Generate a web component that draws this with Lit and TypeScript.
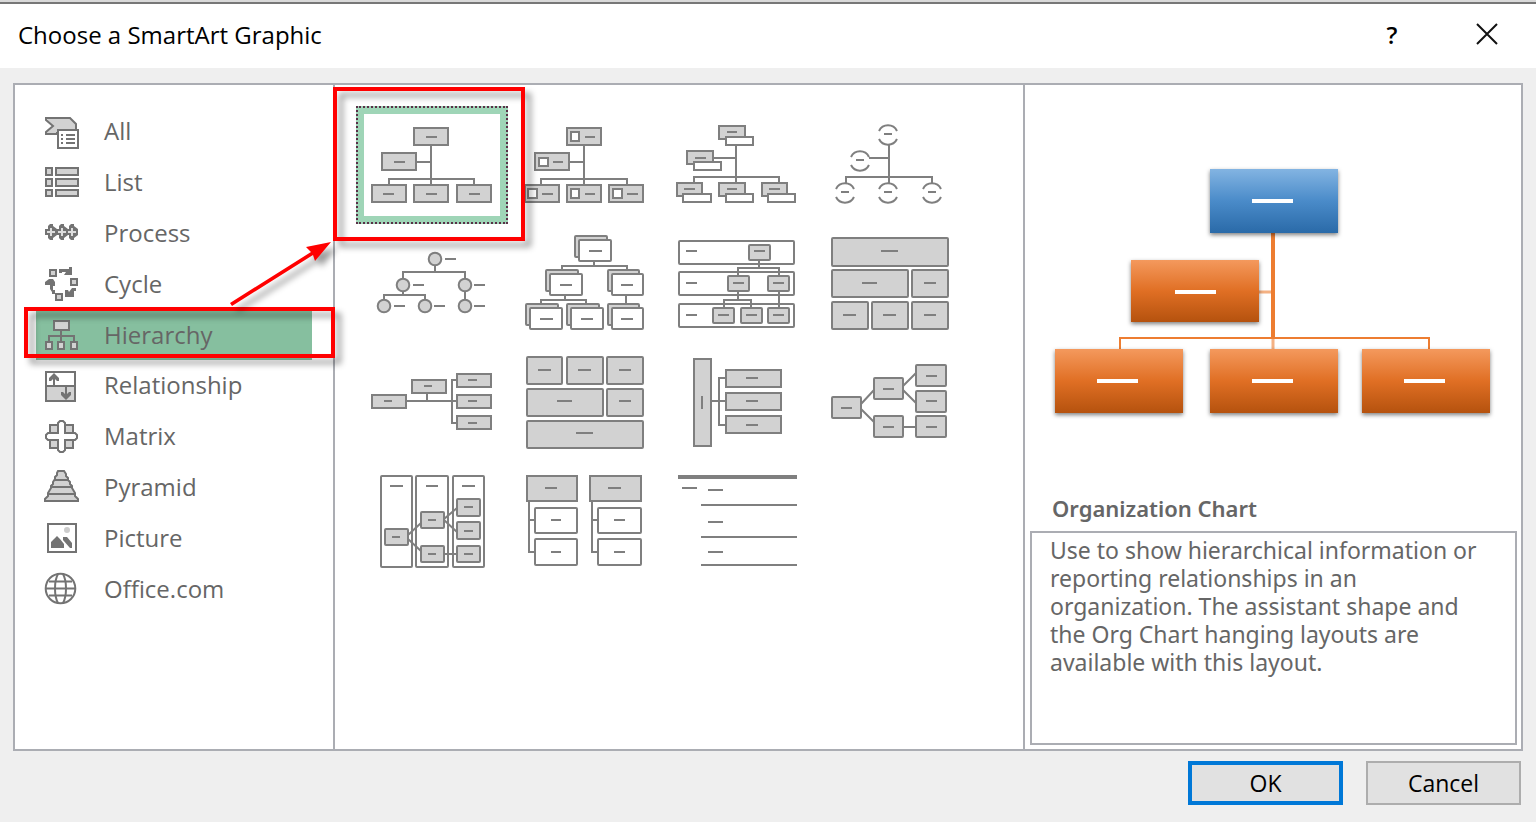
import { LitElement, html, svg, css } from "lit";
import { customElement, state } from "lit/decorators.js";

type Box = [number, number, number, number];

/* Each shape is given by its outer edges: left, top, right, bottom. */
const box = (b: Box, cls = "g", rx = 0) =>
  svg`<rect class=${cls} x=${b[0] + 1} y=${b[1] + 1} width=${b[2] - b[0] - 2} height=${b[3] - b[1] - 2} rx=${rx}></rect>`;
const boxes = (list: Box[], cls = "g", rx = 0) => list.map((b) => box(b, cls, rx));
const dashes = (list: [number, number, number][]) =>
  list.map(([x1, x2, y]) => svg`<path class="l" d=${`M${x1} ${y}H${x2}`}></path>`);
const line = (d: string) => svg`<path class="l" d=${d}></path>`;
const stack = (list: Box[]) =>
  list.map((b) => [box([b[0] - 4, b[1] - 4, b[2] - 4, b[3] - 4], "g", 1), box(b, "w", 1)]);
const arcs = (list: [number, number][]) =>
  list.map(([x, y]) => line(`M${x - 9} ${y - 4}A10 10 0 0 1 ${x + 9} ${y - 4}M${x - 9} ${y + 4}A10 10 0 0 0 ${x + 9} ${y + 4}M${x - 4} ${y - 1}h8`));

const orgLines = "M75 39V78M33 79V73H118V79M61 56H75";

const layouts = [
  {
    name: "Organization Chart",
    art: svg`${line(orgLines)}
      ${boxes([[57, 21, 93, 40], [25, 46, 61, 65], [15, 78, 51, 97], [57, 78, 93, 97], [100, 78, 136, 97]])}
      ${dashes([[70, 81, 31], [38, 49, 56], [27, 38, 88], [70, 81, 88], [113, 124, 88]])}`,
  },
  {
    name: "Picture Organization Chart",
    art: svg`${line("M75 39V78M32 79V73H118V79M61 56H75")}
      ${boxes([[57, 21, 93, 40], [25, 46, 61, 65], [15, 78, 51, 97], [57, 78, 93, 97], [99, 78, 135, 97]])}
      ${boxes([[61, 25, 71, 36], [29, 51, 40, 61], [18, 82, 29, 93], [61, 82, 71, 93], [103, 82, 114, 93]], "w")}
      ${dashes([[76, 86, 31], [44, 54, 56], [33, 44, 88], [76, 86, 88], [118, 129, 88]])}`,
  },
  {
    name: "Name and Title Organization Chart",
    art: svg`${line("M74 40V78M32 79V71H117V79M51 52H74")}
      ${boxes([[56, 19, 84, 34], [24, 44, 52, 59], [14, 76, 41, 91], [56, 76, 84, 91], [99, 76, 126, 91]])}
      ${boxes([[63, 30, 92, 40], [31, 55, 60, 65], [20, 87, 50, 97], [63, 87, 92, 97], [105, 87, 134, 97]], "w")}
      ${dashes([[65, 75, 26], [33, 44, 52], [22, 33, 83], [65, 75, 83], [107, 118, 83]])}`,
  },
  {
    name: "Half Circle Organization Chart",
    art: svg`${line("M74 39V77M31 77V71H117V77M54 52H74")}
      ${arcs([[73, 29], [45, 55], [30, 87], [73, 87], [117, 87]])}`,
  },
  {
    name: "Circle Picture Hierarchy",
    art: svg`${line("M79 40V47M47 54V47H109V54M47 66V70M28 75V70H69V75M109 66V75")}
      ${[[79, 34], [47, 60], [109, 60], [28, 81], [69, 81], [109, 81]].map(([x, y]) => svg`<circle class="g" cx=${x} cy=${y} r="6.3"></circle>`)}
      ${dashes([[89, 100, 34], [57, 68, 60], [118, 129, 60], [38, 49, 81], [78, 89, 81], [118, 129, 81]])}`,
  },
  {
    name: "Hierarchy",
    art: svg`${line("M85 36V41M53 45V41H118V45M56 70V75M32 79V75H77V79M117 70V79")}
      ${stack([[69, 14, 103, 37], [40, 48, 74, 71], [102, 48, 135, 71], [20, 82, 54, 105], [61, 82, 95, 105], [102, 82, 135, 105]])}
      ${dashes([[80, 93, 26], [51, 63, 60], [112, 124, 60], [31, 44, 94], [72, 84, 94], [112, 124, 94]])}`,
  },
  {
    name: "Labeled Hierarchy",
    art: svg`${boxes([[16, 15, 133, 40], [16, 46, 133, 71], [16, 78, 133, 103]], "w", 1)}
      ${line("M97 34V43M76 51V43H117V51M76 66V75M62 83V75H89V83M117 66V83")}
      ${boxes([[86, 19, 109, 36], [65, 50, 88, 67], [105, 50, 128, 67], [50, 82, 73, 99], [78, 82, 101, 99], [105, 82, 128, 99]], "g", 1)}
      ${dashes([[24, 35, 26], [24, 35, 58], [24, 35, 90], [92, 103, 26], [71, 82, 58], [111, 122, 58], [56, 67, 90], [84, 95, 90], [111, 122, 90]])}`,
  },
  {
    name: "Table Hierarchy",
    art: svg`${boxes([[16, 12, 134, 42], [16, 44, 94, 73], [96, 44, 134, 73], [16, 76, 54, 105], [56, 76, 94, 105], [96, 76, 134, 105]], "g", 1)}
      ${dashes([[66, 83, 26], [47, 62, 58], [109, 121, 58], [28, 41, 90], [68, 81, 90], [109, 121, 90]])}`,
  },
  {
    name: "Horizontal Organization Chart",
    art: svg`${line("M50 57H101M71 49V57M101 36H96V79H101")}
      ${boxes([[15, 50, 51, 65], [55, 35, 91, 50], [100, 29, 136, 44], [100, 50, 136, 65], [100, 71, 136, 86]])}
      ${dashes([[28, 36, 57], [68, 76, 42], [112, 121, 36], [112, 121, 57], [112, 121, 79]])}`,
  },
  {
    name: "Architecture Layout",
    art: svg`${boxes([[17, 12, 54, 41], [57, 12, 95, 41], [97, 12, 135, 41], [17, 44, 95, 73], [97, 44, 135, 73], [17, 76, 135, 105]], "g", 1)}
      ${dashes([[29, 42, 26], [69, 82, 26], [110, 122, 26], [48, 63, 57], [110, 122, 57], [67, 84, 89]])}`,
  },
  {
    name: "Horizontal Multi-Level Hierarchy",
    art: svg`${line("M49 57H64M64 34H57V81H64")}
      ${boxes([[31, 14, 50, 103], [63, 25, 120, 44], [63, 48, 120, 67], [63, 71, 120, 90]])}
      ${dashes([[84, 96, 34], [84, 96, 57], [84, 96, 81]])}${line("M40 52V65")}`,
  },
  {
    name: "Horizontal Hierarchy",
    art: svg`${line("M46 60L59 46M46 65L59 78M88 42L101 29M88 46L101 59M88 83H101")}
      ${boxes([[16, 52, 47, 75], [58, 33, 89, 56], [58, 71, 89, 94], [100, 20, 132, 43], [100, 46, 132, 69], [100, 71, 132, 94]], "g", 1)}
      ${dashes([[26, 37, 64], [68, 79, 45], [68, 79, 83], [111, 122, 32], [111, 122, 57], [111, 122, 83]])}`,
  },
  {
    name: "Horizontal Labeled Hierarchy",
    art: svg`${boxes([[24, 12, 57, 105], [59, 12, 93, 105], [96, 12, 129, 105]], "w", 1)}
      ${line("M52 72L65 60M52 76L65 88M88 56L101 45M88 57L101 69M88 91H101")}
      ${boxes([[28, 65, 53, 83], [64, 48, 89, 66], [64, 82, 89, 100], [100, 35, 125, 54], [100, 58, 125, 77], [100, 82, 125, 100]], "g", 1)}
      ${dashes([[34, 47, 23], [70, 82, 23], [106, 119, 23], [36, 44, 74], [72, 80, 57], [72, 80, 91], [108, 117, 44], [108, 117, 68], [108, 117, 91]])}`,
  },
  {
    name: "Hierarchy List",
    art: svg`${line("M20 38V89H26M20 57H26M83 38V89H89M83 57H89")}
      ${boxes([[17, 12, 69, 39], [80, 12, 133, 39]], "g")}
      ${boxes([[25, 44, 69, 71], [25, 75, 69, 103], [88, 44, 133, 71], [88, 75, 133, 103]], "w", 1)}
      ${dashes([[36, 48, 25], [99, 112, 25], [42, 52, 57], [42, 52, 89], [105, 116, 57], [105, 116, 89]])}`,
  },
  {
    name: "Lined List",
    art: svg`<path class="thick" d="M16 14H135"></path>
      ${dashes([[20, 35, 25], [46, 61, 27], [46, 61, 59], [46, 61, 89], [39, 135, 42], [39, 135, 74], [39, 135, 102]])}`,
  },
];

const categories = [
  {
    name: "All",
    art: svg`<path class="g" d="M2 5H26L32 11V20H13V21H2V19L9 13L2 7Z"></path>
      <rect class="w" x="14" y="17" width="20" height="18"></rect>
      <path class="l" d="M17 22H19M22 22H31M17 26H19M22 26H31M17 30H19M22 30H31"></path>`,
  },
  {
    name: "List",
    art: svg`${boxes([[1, 3, 9, 12], [11, 3, 35, 12], [1, 14, 9, 23], [11, 14, 35, 23], [1, 25, 9, 33], [11, 25, 35, 33]])}`,
  },
  {
    name: "Process",
    art: svg`${[0, 11, 21].map((x) => svg`
      <path class="s" d=${`M${x + 1} 14H${x + 4}V11L${x + 6} 9H${x + 9}V11L${x + 13} 14V20L${x + 9} 23V25H${x + 6}L${x + 4} 23V20H${x + 1}Z`}></path>
      <path class="plus" d=${`M${x + 3} 17H${x + 11}M${x + 7} 13V21`}></path>`)}`,
  },
  {
    name: "Cycle",
    art: svg`${boxes([[5, 3, 13, 11], [26, 12, 34, 20], [11, 27, 19, 35]])}
      <path class="s" d="M15 3H25V1H28V9H20L22 6H18V7H15ZM1 16L5 13H9L11 16V20H9V24H11V28H8V26L6 23V19H1ZM21 24H24L25 26L28 22H32V25H30V31H21Z"></path>`,
  },
  {
    name: "Hierarchy",
    art: svg`${line("M17 12V25M5 25V19H30V25")}
      ${boxes([[9, 3, 26, 14], [1, 24, 9, 33], [13, 24, 21, 33], [26, 24, 34, 33]])}`,
  },
  {
    name: "Relationship",
    art: svg`<rect class="w" x="2" y="5" width="29" height="29"></rect><rect class="g" x="2" y="19" width="29" height="15"></rect>
      ${line("M10 8V18M22 20V30")}
      <path class="s" d="M10 6L15 11V14H13L10 11L7 14H5V11ZM22 33L27 28V25H25L22 28L19 25H17V28Z"></path>`,
  },
  {
    name: "Matrix",
    art: svg`${boxes([[5, 6, 15, 16], [20, 6, 30, 16], [5, 21, 15, 31], [20, 21, 30, 31]])}
      <path class="w" d="M14 5L16 3H19L21 5V15H31L33 17V20L31 22H21V32L19 34H16L14 32V22H4L2 20V17L4 15H14Z"></path>`,
  },
  {
    name: "Pyramid",
    art: svg`<path class="g" d="M14 2H20L22 5V7L24 9V11L26 13V15L28 17V19L31 24V27L34 30V32H1V30L4 27V24L7 19V17L9 15V13L11 10V8L13 6V4Z"></path>${line("M10 11H25M8 18H28M4 25H31")}`,
  },
  {
    name: "Picture",
    art: svg`<rect class="w" x="4" y="4" width="28" height="28"></rect><circle class="sun" cx="23" cy="10" r="3"></circle>
      <path class="s" d="M7 28V22L10 19L13 16L16 19L20 24V28ZM19 17H23L28 23V28H26L19 20Z"></path>`,
  },
  {
    name: "Office.com",
    art: svg`<circle class="w" cx="16.5" cy="17.5" r="14.8"></circle>
      <path class="thin" d="M2 17.5H31M5 10.5H28M5 24.5H28M14 3C10 10 10 25 14 32M19 3C23 10 23 25 19 32"></path>`,
  },
];

@customElement("app-root")
export class AppRoot extends LitElement {
  @state() private category = "Hierarchy";
  @state() private layout = "Organization Chart";

  static styles = css`
    :host {
      display: flex;
      flex-direction: column;
      min-height: 100vh;
      box-sizing: border-box;
      background: #efefef;
      color: #666;
      font-family: "Open Sans", "Noto Sans", sans-serif;
      font-size: 24px;
      line-height: 28px;
    }
    * { box-sizing: border-box; }
    h1, h2, p, ul { margin: 0; padding: 0; font-weight: 400; font-size: inherit; }
    ul { list-style: none; }
    button { font: inherit; color: inherit; border: 0; padding: 0; background: none; }
    svg { display: block; flex: none; overflow: visible; }
    .titlebar {
      display: flex;
      align-items: center;
      justify-content: space-between;
      height: 68px;
      padding: 0 38px 0 18px;
      border-top: 2px solid #d9d9d9;
      box-shadow: inset 0 2px #777;
      background: #fff;
      color: #000;
    }
    .window-actions { display: flex; align-items: center; gap: 76px; }
    .help { width: 16px; font-weight: 600; }
    .cross { fill: none; stroke: #111; stroke-width: 2; }
    .body {
      flex: 1;
      display: grid;
      grid-template-columns: 320px minmax(0, 1fr) 498px;
      position: relative;
      margin: 15px 13px 0 13px;
      border: 2px solid #abadb3;
      background: #fff;
    }
    .categories { padding: 21px 21px 0; border-right: 2px solid #abadb3; }
    .category-list { display: grid; grid-auto-rows: 1fr; height: 508px; }
    .category {
      position: relative;
      display: flex;
      align-items: center;
      gap: 24px;
      width: 100%;
      height: 100%;
      padding-left: 8px;
      text-align: left;
    }
    .category.selected { background: #86bf9f; }
    .gallery {
      display: grid;
      grid-template-columns: repeat(auto-fill, 152px);
      grid-auto-rows: 118px;
      gap: 1px;
      align-content: start;
      padding: 21px 0 0 21px;
    }
    .tile { position: relative; border: 2px solid transparent; padding: 6px; }
    .tile > svg { margin: -8px; }
    .tile.selected {
      z-index: 1;
      border: 2px dotted #5a3048;
      background: linear-gradient(#fff, #fff) content-box, #9fd5b7;
    }
    .g, .w, .l, .thick, .thin { stroke: #7f7f7f; stroke-width: 2; }
    .g { fill: #d2d2d2; }
    .w { fill: #fff; }
    .l, .thick, .thin { fill: none; }
    .thick { stroke-width: 4; }
    .category .g, .category .w, .category .l, .category .thin { stroke: #737373; }
    .s { fill: #737373; }
    .plus { fill: none; stroke: #ddd; stroke-width: 2; }
    .sun { fill: #ccc; }
    .marker {
      position: absolute;
      z-index: 2;
      border: 4px solid #f00;
      filter: drop-shadow(6px 6px 3px rgba(0, 0, 0, 0.4));
      pointer-events: none;
    }
    .marker.on-category { inset: -2px -23px 2px -12px; }
    .marker.on-tile { inset: -21px -19px -19px -25px; }
    .arrow {
      position: absolute;
      left: 211px;
      top: 152px;
      z-index: 2;
      filter: drop-shadow(6px 6px 3px rgba(0, 0, 0, 0.4));
      pointer-events: none;
    }
    .arrow path { fill: #f00; }
    .details { display: flex; flex-direction: column; padding: 82px 4px 4px 5px; border-left: 2px solid #abadb3; }
    .preview { margin-left: 23px; filter: drop-shadow(0 2px 2px rgba(0, 0, 0, 0.5)); }
    .connectors { margin-left: 23px; margin-bottom: -248px; }
    .wire { fill: none; stroke: #ed7d31; }
    .detail-name { margin: 79px 0 9px 22px; font-family: "Noto Sans", sans-serif; font-size: 22px; font-weight: 600; }
    .description {
      flex: 1;
      padding: 3px 30px 4px 18px;
      border: 2px solid #abadb3;
      font-family: "Noto Sans", sans-serif;
      font-size: 23px;
    }
    .footer { display: flex; justify-content: flex-end; gap: 23px; padding: 10px 15px 17px; }
    .action {
      width: 155px;
      height: 44px;
      border: 2px solid #adadad;
      background: #e1e1e1;
      color: #000;
      font-size: 23px;
      line-height: 28px;
    }
    .action.primary { border: 4px solid #0078d7; }
  `;

  private preview() {
    const nodes = [
      [157, 2, 64, "url(#blue)"],
      [78, 93, 62, "url(#orange)"],
      [2, 182, 64, "url(#orange)"],
      [157, 182, 64, "url(#orange)"],
      [309, 182, 64, "url(#orange)"],
    ] as [number, number, number, string][];
    return html`
      <svg class="connectors" width="440" height="248" viewBox="0 0 440 248" aria-hidden="true">
        <path class="wire" stroke-width="4" d="M220 66V171"></path>
        <path class="wire" stroke-width="3" stroke-opacity="0.6" d="M206 125H219M220 171V183"></path>
        <path class="wire" stroke-width="2" d="M67 182V171H376V182"></path>
      </svg>
      <svg class="preview" width="440" height="248" viewBox="0 0 440 248" role="img" aria-label="Organization Chart preview">
        <defs>
          <linearGradient id="blue" x1="0" y1="0" x2="0" y2="1">
            <stop offset="0" stop-color="#83b4e2"></stop><stop offset="0.5" stop-color="#4a8bc9"></stop><stop offset="1" stop-color="#2a6aa8"></stop>
          </linearGradient>
          <linearGradient id="orange" x1="0" y1="0" x2="0" y2="1">
            <stop offset="0" stop-color="#f4995d"></stop><stop offset="0.5" stop-color="#e06f24"></stop><stop offset="1" stop-color="#b5520e"></stop>
          </linearGradient>
        </defs>
        ${nodes.map(([x, y, h, fill]) => svg`
          <rect x=${x} y=${y} width="128" height=${h} fill=${fill}></rect>
          <rect x=${x + (h === 64 ? 42 : 44)} y=${y + 30} width="41" height="4" fill="#fff"></rect>`)}
      </svg>`;
  }

  render() {
    return html`
      <header class="titlebar">
        <h1>Choose a SmartArt Graphic</h1>
        <div class="window-actions">
          <button class="help" aria-label="Help">?</button>
          <button aria-label="Close">
            <svg width="22" height="22" viewBox="0 0 22 22"><path class="cross" d="M1 0L21 20M21 0L1 20"></path></svg>
          </button>
        </div>
      </header>
      <main class="body">
        <nav class="categories" aria-label="Categories">
          <ul class="category-list">
            ${categories.map((c) => html`
              <li>
                <button class="category ${c.name === this.category ? "selected" : ""}" @click=${() => (this.category = c.name)}>
                  <svg width="36" height="36" viewBox="0 0 36 36" aria-hidden="true">${c.art}</svg>
                  <span>${c.name}</span>
                  ${c.name === "Hierarchy" ? html`<span class="marker on-category"></span>` : null}
                </button>
              </li>`)}
          </ul>
        </nav>
        <section class="gallery" aria-label="Layouts">
          ${layouts.map((l) => html`
            <button class="tile ${l.name === this.layout ? "selected" : ""}" aria-label=${l.name} @click=${() => (this.layout = l.name)}>
              <svg width="152" height="118" viewBox="0 0 152 118" aria-hidden="true">${l.art}</svg>
              ${l.name === "Organization Chart" ? html`<span class="marker on-tile"></span>` : null}
            </button>`)}
        </section>
        <aside class="details">
          ${this.preview()}
          <h2 class="detail-name">Organization Chart</h2>
          <p class="description">
            Use to show hierarchical information or reporting relationships in an organization. The assistant
            shape and the Org Chart hanging layouts are available with this layout.
          </p>
        </aside>
        <svg class="arrow" width="110" height="72" viewBox="0 0 110 72" aria-hidden="true">
          <path d="M4 66L85 15L80 10L105 5L89 24L87 18L6 69Z"></path>
        </svg>
      </main>
      <footer class="footer">
        <button class="action primary">OK</button>
        <button class="action">Cancel</button>
      </footer>
    `;
  }
}
